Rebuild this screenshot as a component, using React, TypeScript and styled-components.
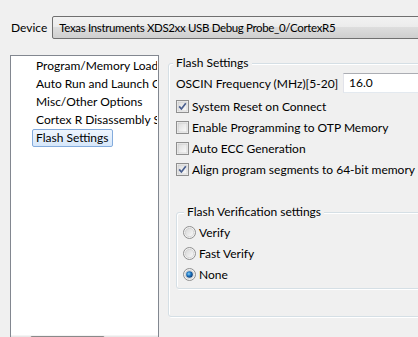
import styled, { createGlobalStyle } from "styled-components";

const GlobalStyle = createGlobalStyle`
  html, body {
    margin: 0;
    padding: 0;
    background: #f0f0f0;
  }
  body {
    font-family: Lato, "Noto Sans", sans-serif;
    font-size: 12px;
    color: #000;
  }
`;

const Page = styled.div`
  width: 418px;
  height: 337px;
  overflow: hidden;
  background: #f0f0f0;
`;

const DeviceRow = styled.div`
  display: flex;
  align-items: center;
  gap: 5px;
  height: 23px;
  margin: 16px -60px 0 0;
  padding-left: 11px;
`;

const Label = styled.span`
  white-space: nowrap;
`;

const Combo = styled.div`
  flex: 1;
  height: 21px;
  line-height: 21px;
  padding-left: 6px;
  border: 1px solid #707070;
  border-radius: 2px;
  background: linear-gradient(#f2f2f2, #ebebeb 50%, #dddddd 50%, #cfcfcf);
  font-size: 11.5px;
  letter-spacing: -0.35px;
  white-space: nowrap;
`;

const Body = styled.div`
  display: flex;
  align-items: flex-start;
  margin-top: 16px;
`;

const Tree = styled.div`
  display: flex;
  flex-direction: column;
  flex: 0 0 149px;
  height: 299px;
  margin-left: 10px;
  box-sizing: border-box;
  border: 1px solid #828790;
  background: #fff;
  overflow: hidden;
`;

const TreeItems = styled.div`
  flex: 1;
  padding-top: 1px;
`;

const TreeItem = styled.div<{ $selected?: boolean }>`
  box-sizing: border-box;
  width: fit-content;
  max-width: 126px;
  height: 18px;
  line-height: 16px;
  margin-left: 21px;
  padding: 0 3px;
  overflow: hidden;
  white-space: nowrap;
  border: 1px solid ${({ $selected }) => ($selected ? "#84acdd" : "transparent")};
  border-radius: 2px;
  background: ${({ $selected }) =>
    $selected ? "linear-gradient(#eef5fd, #d6e7fa)" : "transparent"};
`;

const HScroll = styled.div`
  flex: 0 0 17px;
  background: #e8e8e8;
  border-top: 1px solid #f4f4f4;
`;

const Thumb = styled.div`
  margin-left: 19px;
  width: 73px;
  height: 15px;
  border: 1px solid #8a8a8a;
  border-radius: 2px;
  background: linear-gradient(#f3f3f3, #dcdcdc);
`;

const Group = styled.div<{ $height?: number; $pad: number }>`
  box-sizing: border-box;
  border: 1px solid #d5dfe5;
  border-radius: 3px;
  box-shadow: inset 1px 1px #fff, 1px 1px #fff;
  padding: 0 0 3px ${({ $pad }) => $pad}px;
  ${({ $height }) => ($height ? `height: ${$height}px;` : "")}
`;

const OuterGroup = styled(Group)`
  flex: 1;
  margin: 8px -80px 0 9px;
`;

const InnerGroup = styled(Group)`
  margin-top: 32px;
`;

const GroupTitle = styled.div<{ $shift: number }>`
  width: fit-content;
  height: 16px;
  line-height: 16px;
  margin: -9px 0 0 ${({ $shift }) => $shift}px;
  padding: 0 3px;
  background: #f0f0f0;
  white-space: nowrap;
`;

const FieldRow = styled.div`
  display: flex;
  align-items: center;
  height: 20px;
  margin-top: 2px;
`;

const FieldLabel = styled.span`
  flex: 0 0 167px;
  white-space: nowrap;
`;

const TextInput = styled.div`
  flex: 1;
  height: 18px;
  line-height: 18px;
  padding-left: 5px;
  border: 1px solid #abadb3;
  border-color: #abadb3 #dbdfe6 #e3e9ef #e2e3ea;
  background: #fff;
`;

const OptionList = styled.div<{ $top: number }>`
  display: flex;
  flex-direction: column;
  margin-top: ${({ $top }) => $top}px;
`;

const Option = styled.div`
  display: flex;
  align-items: center;
  gap: 3px;
  height: 21px;
  white-space: nowrap;
`;

const CheckBox = ({ checked }: { checked?: boolean }) => (
  <svg width="13" height="13" viewBox="0 0 13 13">
    <defs>
      <linearGradient id="cbfill" x1="0" y1="0" x2="1" y2="1">
        <stop offset="0" stopColor="#dcdcdc" />
        <stop offset="1" stopColor="#fbfbfb" />
      </linearGradient>
    </defs>
    <rect x="0.5" y="0.5" width="12" height="12" fill="#f4f4f4" stroke="#8f8f8f" />
    <rect x="2" y="2" width="9" height="9" fill="url(#cbfill)" stroke="#c4c4c4" strokeWidth="0.6" />
    {checked && (
      <path
        d="M3.2 6.4 L5.4 9 L9.8 3.2"
        fill="none"
        stroke="#4a5f8f"
        strokeWidth="1.7"
      />
    )}
  </svg>
);

const Radio = ({ checked }: { checked?: boolean }) => (
  <svg width="13" height="13" viewBox="0 0 13 13">
    <defs>
      <linearGradient id="rbfill" x1="0" y1="0" x2="1" y2="1">
        <stop offset="0" stopColor="#d6d6d6" />
        <stop offset="1" stopColor="#fbfbfb" />
      </linearGradient>
      <radialGradient id="rbdot" cx="0.4" cy="0.4" r="0.6">
        <stop offset="0" stopColor="#8fd3f7" />
        <stop offset="0.5" stopColor="#1f78c4" />
        <stop offset="1" stopColor="#0d3f7a" />
      </radialGradient>
    </defs>
    <circle cx="6.5" cy="6.5" r="6" fill="#f2f2f2" stroke="#8f8f8f" />
    <circle cx="6.5" cy="6.5" r="4.2" fill="url(#rbfill)" stroke="#c8c8c8" strokeWidth="0.6" />
    {checked && <circle cx="6.5" cy="6.5" r="3.3" fill="url(#rbdot)" />}
  </svg>
);

const treeItems = [
  "Program/Memory Load Options",
  "Auto Run and Launch Options",
  "Misc/Other Options",
  "Cortex R Disassembly Style",
  "Flash Settings",
];

const checks = [
  { label: "System Reset on Connect", checked: true },
  { label: "Enable Programming to OTP Memory", checked: false },
  { label: "Auto ECC Generation", checked: false },
  { label: "Align program segments to 64-bit memory", checked: true },
];

const radios = [
  { label: "Verify", checked: false },
  { label: "Fast Verify", checked: false },
  { label: "None", checked: true },
];

export default function App() {
  return (
    <Page>
      <GlobalStyle />
      <DeviceRow>
        <Label>Device</Label>
        <Combo>Texas Instruments XDS2xx USB Debug Probe_0/CortexR5</Combo>
      </DeviceRow>
      <Body>
        <Tree>
          <TreeItems>
            {treeItems.map((t) => (
              <TreeItem key={t} $selected={t === "Flash Settings"}>
                {t}
              </TreeItem>
            ))}
          </TreeItems>
          <HScroll>
            <Thumb />
          </HScroll>
        </Tree>
        <OuterGroup $pad={7} $height={254}>
          <GroupTitle $shift={-3}>Flash Settings</GroupTitle>
          <FieldRow>
            <FieldLabel>OSCIN Frequency (MHz)[5-20]</FieldLabel>
            <TextInput>16.0</TextInput>
          </FieldRow>
          <OptionList $top={3}>
            {checks.map((c) => (
              <Option key={c.label}>
                <CheckBox checked={c.checked} />
                {c.label}
              </Option>
            ))}
          </OptionList>
          <InnerGroup $pad={6}>
            <GroupTitle $shift={1}>Flash Verification settings</GroupTitle>
            <OptionList $top={2}>
              {radios.map((r) => (
                <Option key={r.label}>
                  <Radio checked={r.checked} />
                  {r.label}
                </Option>
              ))}
            </OptionList>
          </InnerGroup>
        </OuterGroup>
      </Body>
    </Page>
  );
}
